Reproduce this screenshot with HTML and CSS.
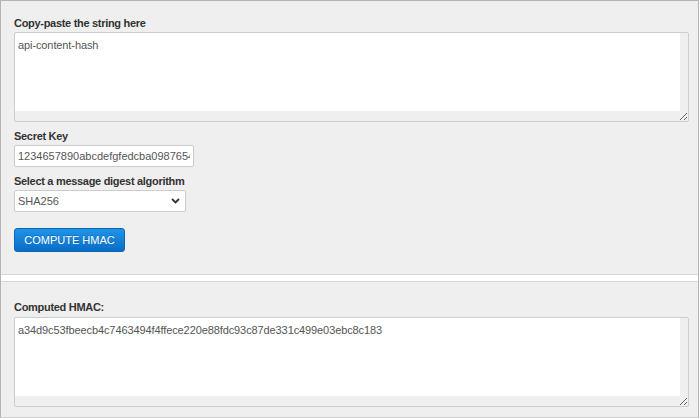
FILE: index.html
```html
<!DOCTYPE html>
<html>
<head>
<meta charset="utf-8">
<link rel="stylesheet" href="styles.css">
</head>
<body>
<div class="frame">
  <form class="panel panel-input">
    <label class="field-label" for="msg">Copy-paste the string here</label>
    <textarea id="msg" class="area">api-content-hash</textarea>
    <label class="field-label gap" for="key">Secret Key</label>
    <input id="key" class="text-input" type="text" value="1234657890abcdefgfedcba0987654321">
    <label class="field-label gap sel-label" for="algo">Select a message digest algorithm</label>
    <div class="select-wrap">
      <select id="algo" class="select">
        <option>SHA256</option>
      </select>
      <svg class="chev" width="9" height="6" viewBox="0 0 9 6"><path d="M1 1 L4.5 4.5 L8 1" fill="none" stroke="#333" stroke-width="1.8"/></svg>
    </div>
    <button type="button" class="btn">COMPUTE HMAC</button>
  </form>
  <div class="spacer"></div>
  <div class="panel panel-output">
    <label class="field-label" for="out">Computed HMAC:</label>
    <textarea id="out" class="area">a34d9c53fbeecb4c7463494f4ffece220e88fdc93c87de331c499e03ebc8c183</textarea>
  </div>
</div>
</body>
</html>
```
FILE: styles.css
```css
html, body {
  margin: 0;
  padding: 0;
  background: #ffffff;
}
body {
  font-family: "Liberation Sans", Arial, sans-serif;
}
.frame {
  width: 699px;
  height: 418px;
  box-sizing: border-box;
  border: 1px solid #b4b4b4;
  border-bottom-color: #cfcfcf;
  display: flex;
  flex-direction: column;
  background: #ffffff;
}
.panel {
  background: #efefef;
  padding: 15px 9px 0 13px;
  display: flex;
  flex-direction: column;
  align-items: flex-start;
  margin: 0;
}
.panel-input {
  padding-bottom: 22px;
  border-bottom: 1px solid #d6d6d6;
}
.spacer {
  height: 6px;
  background: #ffffff;
}
.panel-output {
  flex: 1;
  border-top: 1px solid #d6d6d6;
  padding-top: 18px;
}
.field-label {
  display: block;
  font-size: 11px;
  line-height: 14px;
  font-weight: bold;
  letter-spacing: -0.3px;
  color: #333333;
  margin-bottom: 2px;
}
.gap {
  margin-top: 7px;
  margin-bottom: 2px;
}
.sel-label {
  margin-top: 7px;
}
.panel-output .field-label {
  margin-bottom: 3px;
}
.area {
  box-sizing: border-box;
  width: 675px;
  height: 90px;
  margin: 0;
  padding: 5px 3px;
  border: 1px solid #cdcdcd;
  border-radius: 2px;
  background:
    linear-gradient(#efefef, #efefef) right top / 8px 100% no-repeat,
    linear-gradient(#efefef, #efefef) left bottom / 100% 10px no-repeat,
    #ffffff;
  font-family: "Liberation Sans", Arial, sans-serif;
  font-size: 11px;
  line-height: 15px;
  letter-spacing: -0.1px;
  color: #555555;
  overflow: hidden;
  resize: both;
  outline: none;
}
.text-input {
  box-sizing: border-box;
  width: 180px;
  height: 22px;
  margin: 0;
  padding: 2px 3px;
  border: 1px solid #cdcdcd;
  border-radius: 2px;
  background: #ffffff;
  font-family: "Liberation Sans", Arial, sans-serif;
  font-size: 11px;
  color: #555555;
  outline: none;
}
.select-wrap {
  position: relative;
  width: 172px;
  height: 22px;
}
.select {
  -webkit-appearance: none;
  appearance: none;
  box-sizing: border-box;
  width: 172px;
  height: 22px;
  margin: 0;
  padding: 2px 3px;
  border: 1px solid #cdcdcd;
  border-radius: 2px;
  background: #ffffff;
  font-family: "Liberation Sans", Arial, sans-serif;
  font-size: 11px;
  color: #555555;
  outline: none;
}
.chev {
  position: absolute;
  right: 6px;
  top: 8px;
  pointer-events: none;
}
.btn {
  margin-top: 16px;
  box-sizing: border-box;
  width: 111px;
  height: 24px;
  padding: 0;
  border: 1px solid #0b66ba;
  border-radius: 3px;
  background: linear-gradient(to bottom, #1f95e8 0%, #0a6cc6 100%);
  color: #ffffff;
  font-family: "Liberation Sans", Arial, sans-serif;
  font-size: 11px;
  letter-spacing: 0;
  text-shadow: 0 -1px 0 rgba(0,0,0,0.2);
  cursor: pointer;
}
```
